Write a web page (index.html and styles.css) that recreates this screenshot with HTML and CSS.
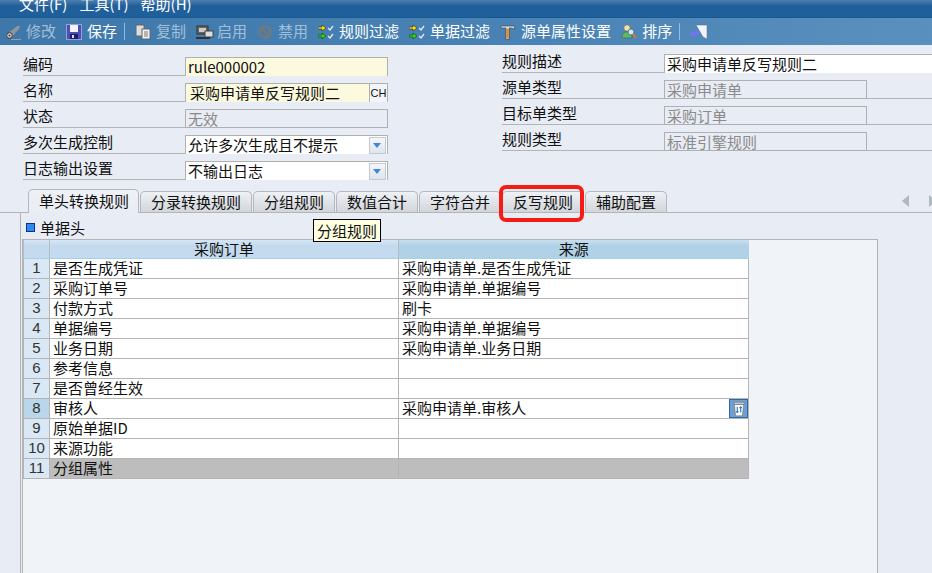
FILE: index.html
```html
<!DOCTYPE html>
<html lang="zh-CN">
<head>
    <meta charset="UTF-8">
    <title>规则</title>
    <link rel="stylesheet" href="styles.css">
</head>
<body>
    <div class="menubar">
        <span>文件(F)</span>
        <span>工具(T)</span>
        <span>帮助(H)</span>
    </div>

    <div class="toolbar">
        <span class="tool off"><svg class="ico" viewBox="0 0 16 16"><path d="M2 10 L12 2 L15 2 L14 5 L6 14 Z" fill="#8f9499"/><circle cx="4.5" cy="11.5" r="2.8" fill="#d8d8d8" stroke="#333"/><circle cx="4.5" cy="11.5" r="1" fill="#333"/><path d="M6 15.5 H16" stroke="#a89a88"/></svg>修改</span>
        <span class="tool"><svg class="ico" viewBox="0 0 16 16"><rect x=".5" y=".5" width="15" height="15" fill="#4a4fb0" stroke="#9a9ee0"/><rect x="4" y="1" width="8" height="7" fill="#f4f4ff"/><rect x="4" y="10" width="8" height="5" fill="#1c1f70"/><rect x="6" y="11" width="2" height="3" fill="#ddd"/></svg>保存</span>
        <i class="sep"></i>
        <span class="tool off"><svg class="ico" viewBox="0 0 16 16"><rect x="1" y="1" width="8" height="11" fill="#ddd" stroke="#666"/><rect x="7" y="5" width="8" height="10" fill="#f2f2f2" stroke="#666"/><path d="M9 8 H13 M9 10 H13 M9 12 H13" stroke="#777"/></svg>复制</span>
        <span class="tool off"><svg class="ico wide" viewBox="0 0 18 16"><rect x="1" y="2" width="11" height="8" fill="#666" stroke="#333"/><rect x="3" y="4" width="7" height="4" fill="#ccc"/><rect x="9" y="7" width="8" height="6" fill="#ddd" stroke="#444"/><path d="M0 14 H14" stroke="#333" stroke-width="2"/></svg>启用</span>
        <span class="tool off"><svg class="ico" viewBox="0 0 16 16"><circle cx="8" cy="8" r="5.5" fill="none" stroke="#777" stroke-width="2.4"/><path d="M4 4 L12 12" stroke="#777" stroke-width="2"/></svg>禁用</span>
        <span class="tool"><svg class="ico" viewBox="0 0 16 16"><path d="M0 3 H4 V1 L8 4 L4 7 V5 H0 Z" fill="#ffd800" stroke="#222" stroke-width=".5"/><path d="M0 11 H4 V9 L8 12 L4 15 V13 H0 Z" fill="#22e000" stroke="#222" stroke-width=".5"/><path d="M10 4 L12 6 L15 2 M10 12 L12 14 L15 10" fill="none" stroke="#e8e8e8" stroke-width="1.3"/></svg>规则过滤</span>
        <span class="tool"><svg class="ico" viewBox="0 0 16 16"><path d="M0 3 H4 V1 L8 4 L4 7 V5 H0 Z" fill="#ffd800" stroke="#222" stroke-width=".5"/><path d="M0 11 H4 V9 L8 12 L4 15 V13 H0 Z" fill="#22e000" stroke="#222" stroke-width=".5"/><path d="M10 4 L12 6 L15 2 M10 12 L12 14 L15 10" fill="none" stroke="#e8e8e8" stroke-width="1.3"/></svg>单据过滤</span>
        <span class="tool"><svg class="ico" viewBox="0 0 16 16"><path d="M1 2 H14 L15 5 L11 4 H9 V14 H10 V15 H5 V14 H6 V4 H1 Z" fill="#d9d9d9" stroke="#333" stroke-width=".5"/><rect x="6" y="5" width="3" height="9" fill="#e09030"/></svg>源单属性设置</span>
        <span class="tool"><svg class="ico" viewBox="0 0 16 16"><circle cx="6" cy="4" r="3" fill="#f0e2a0" stroke="#777" stroke-width=".5"/><path d="M1 14 C1 9 3 8 6 8 C9 8 11 9 11 14 Z" fill="#5cb868" stroke="#2a6a38" stroke-width=".5"/><circle cx="10" cy="8" r="3" fill="#cfe6ff" stroke="#555" stroke-width=".7"/><path d="M12 10 L15 14" stroke="#d08020" stroke-width="2"/></svg>排序</span>
        <i class="sep"></i>
        <span class="tool"><svg class="ico wide" viewBox="0 0 18 16"><path d="M6 1 H17 V15 L13 13 Z" fill="#f0f4ff" stroke="#667" stroke-width=".5"/><path d="M0 8 L5 8 L5 5 L11 9 L5 12 L0 12 Z" fill="#6a78e8"/></svg></span>
    </div>

    <div class="form">
        <div class="form-col left">
            <div class="row"><label>编码</label><div class="field yellow">rule000002</div></div>
            <div class="row"><label>名称</label><div class="field yellow name">采购申请单反写规则二<b class="ch">CH</b></div></div>
            <div class="row"><label>状态</label><div class="field disabled">无效</div></div>
            <div class="row"><label>多次生成控制</label><div class="field select">允许多次生成且不提示<b class="drop"></b></div></div>
            <div class="row"><label>日志输出设置</label><div class="field select">不输出日志<b class="drop"></b></div></div>
        </div>
        <div class="form-col right">
            <div class="row"><label>规则描述</label><div class="field long">采购申请单反写规则二</div></div>
            <div class="row"><label>源单类型</label><div class="field disabled">采购申请单</div></div>
            <div class="row"><label>目标单类型</label><div class="field disabled">采购订单</div></div>
            <div class="row"><label>规则类型</label><div class="field disabled">标准引擎规则</div></div>
        </div>
    </div>

    <div class="tabs">
        <span class="tab active">单头转换规则</span>
        <span class="tab">分录转换规则</span>
        <span class="tab">分组规则</span>
        <span class="tab">数值合计</span>
        <span class="tab">字符合并</span>
        <span class="tab">反写规则</span>
        <span class="tab">辅助配置</span>
        <span class="tab-arrows"><i class="arrow back"></i><i class="arrow next"></i></span>
    </div>

    <div class="panel">
        <div class="panel-title"><i class="square"></i>单据头</div>
        <div class="grid-wrap">
            <table class="grid">
                <colgroup><col class="c0"><col class="c1"><col class="c2"></colgroup>
                <thead>
                    <tr><th></th><th>采购订单</th><th class="src">来源</th></tr>
                </thead>
                <tbody>
                    <tr><td class="num">1</td><td>是否生成凭证</td><td>采购申请单.是否生成凭证</td></tr>
                    <tr><td class="num">2</td><td>采购订单号</td><td>采购申请单.单据编号</td></tr>
                    <tr><td class="num">3</td><td>付款方式</td><td>刷卡</td></tr>
                    <tr><td class="num">4</td><td>单据编号</td><td>采购申请单.单据编号</td></tr>
                    <tr><td class="num">5</td><td>业务日期</td><td>采购申请单.业务日期</td></tr>
                    <tr><td class="num">6</td><td>参考信息</td><td></td></tr>
                    <tr><td class="num">7</td><td>是否曾经生效</td><td></td></tr>
                    <tr class="current"><td class="num">8</td><td>审核人</td><td class="has-btn">采购申请单.审核人<span class="clear-btn"><svg viewBox="0 0 14 14"><path d="M3 3 H11 L10 13 H4 Z" fill="#fff" stroke="#777" stroke-width=".6"/><rect x="2.5" y="1" width="9" height="2" fill="#ccc" stroke="#666" stroke-width=".5"/><path d="M5.5 5 V10 M4.5 9 L5.5 10 L6.5 9 M8.5 10 V5 M7.5 6 L8.5 5 L9.5 6" fill="none" stroke="#2a78c8"/></svg></span></td></tr>
                    <tr><td class="num">9</td><td>原始单据ID</td><td></td></tr>
                    <tr><td class="num">10</td><td>来源功能</td><td></td></tr>
                    <tr class="grey"><td class="num">11</td><td>分组属性</td><td></td></tr>
                </tbody>
            </table>
        </div>
    </div>

    <div class="tooltip">分组规则</div>
    <div class="mark"></div>
</body>
</html>
```

FILE: styles.css
```css
html, body {
    margin: 0;
    height: 100%;
    overflow: hidden;
}
body {
    position: relative;
    font-family: "Noto Sans CJK SC", "Liberation Sans", sans-serif;
    font-size: 15px;
    color: #111;
    background-color: #e8ecf4;
}
.menubar {
    height: 18px;
    display: flex;
    gap: 12px;
    padding-left: 19px;
    overflow: hidden;
    color: #fff;
    background: linear-gradient(#4d80ae, #215f9a 35%, #1e5f9b);
    border-bottom: 1px solid #1a5a90;
    box-sizing: border-box;
}
.menubar span {
    margin-top: -5px;
    line-height: 18px;
}
.toolbar {
    height: 27px;
    display: flex;
    align-items: center;
    padding-left: 5px;
    background: linear-gradient(90deg, #3e78ab, #4a84b6 60%, #5a90bd);
    color: #fff;
}
.tool {
    display: flex;
    align-items: center;
    gap: 5px;
    margin-right: 10px;
    padding-bottom: 2px;
    white-space: nowrap;
}
.tool.off {
    color: #a3bfd8;
}
.ico {
    width: 16px;
    height: 16px;
    margin-top: 2px;
    flex: none;
}
.ico.wide {
    width: 18px;
    margin-right: -2px;
}
.sep {
    width: 1px;
    height: 17px;
    background-color: #8cc0e6;
    margin: 0 10px 0 -3px;
}
.form {
    display: flex;
    height: 145px;
}
.form-col {
    display: flex;
    flex-direction: column;
}
.form-col.left {
    width: 365px;
    margin: 5px 0 0 23px;
}
.form-col.right {
    flex: 1;
    margin: 2px 0 0 114px;
}
.row {
    display: flex;
    height: 26px;
    box-sizing: border-box;
    padding-top: 7px;
    border-bottom: 1px solid #b4b4b4;
    position: relative;
}
.row label {
    width: 162px;
    flex: none;
    line-height: 16px;
    margin-top: -1px;
}
.field {
    position: relative;
    width: 203px;
    height: 19px;
    box-sizing: border-box;
    border: 1px solid #b0b0b0;
    border-bottom: 0;
    padding-left: 2px;
    line-height: 18px;
    background-color: #fff;
    white-space: nowrap;
    overflow: hidden;
}
.field.yellow {
    background-color: #fbfade;
}
.field.name {
    padding-left: 4px;
}
.field.disabled {
    background-color: #e8ecf4;
    color: #8a8a8a;
    border-bottom: 1px solid #b0b0b0;
}
.field.long {
    width: 270px;
    border-right: 0;
}
.ch {
    position: absolute;
    top: 0;
    right: 0;
    width: 17px;
    height: 18px;
    border-left: 1px solid #b0b0b0;
    background-color: #f2f4f8;
    font: 11px/18px "Liberation Sans", sans-serif;
    text-align: center;
}
.drop {
    position: absolute;
    top: 1px;
    right: 1px;
    width: 15px;
    height: 15px;
    border: 1px solid #c4c8d0;
    background: linear-gradient(#f4f6fa, #dfe5ee);
}
.drop::after {
    content: "";
    position: absolute;
    left: 3px;
    top: 5px;
    border: 4px solid transparent;
    border-top: 5px solid #3f86dc;
    border-bottom: 0;
}
.tabs {
    height: 23px;
    display: flex;
    align-items: flex-end;
    gap: 1px;
    padding-left: 28px;
    border-bottom: 1px solid #b4b4b4;
    box-sizing: border-box;
}
.tab {
    height: 20px;
    line-height: 19px;
    padding: 0 10px;
    border: 1px solid #b4b8be;
    border-bottom: 0;
    border-radius: 5px 5px 0 0;
    background: linear-gradient(#eef1f5, #d2d6da);
    white-space: nowrap;
}
.tab.active {
    height: 23px;
    line-height: 22px;
    padding-right: 9px;
    background: linear-gradient(#eef1f6, #e8ecf4);
    margin-bottom: -1px;
}
.tab-arrows {
    margin-left: auto;
    display: flex;
    gap: 20px;
    height: 22px;
    align-items: center;
}
.arrow {
    border: 6px solid transparent;
    border-left-width: 0;
    border-right: 7px solid #b0b8c0;
}
.arrow.next {
    border-right-width: 0;
    border-left: 7px solid #b0b8c0;
    margin-right: -4px;
}
.panel {
    margin-left: 20px;
    border-left: 1px solid #b4b4b4;
    padding-left: 1px;
}
.panel-title {
    height: 26px;
    display: flex;
    align-items: center;
    gap: 5px;
    padding: 2px 0 0 4px;
    box-sizing: border-box;
}
.square {
    width: 7px;
    height: 7px;
    border: 1px solid #0c2f9a;
    background-color: #2f8ae8;
}
.grid-wrap {
    width: 856px;
    height: 340px;
    box-sizing: border-box;
    background-color: #f0f4f8;
    border-top: 1px solid #b4b4b4;
    border-left: 1px solid #b4b4b4;
    border-right: 1px solid #b4b4b4;
}
.grid {
    width: 726px;
    table-layout: fixed;
    border-collapse: collapse;
}
.c0 {
    width: 26px;
}
.c2 {
    width: 350px;
}
.grid th {
    height: 18px;
    padding: 0;
    line-height: 18px;
    font-weight: 400;
    background: linear-gradient(#d6e6f4, #c4dbef 30%);
    border-left: 1px solid #b4bcc4;
    border-bottom: 1px solid #9fd4e0;
}
.grid th.src {
    background: linear-gradient(#c8e0ef, #b1d2e6 30%);
}
.grid td {
    height: 17px;
    padding: 0 0 2px 3px;
    line-height: 16px;
    background-color: #fff;
    border: 1px solid #b4b4b4;
    white-space: nowrap;
}
.grid td.num {
    padding: 0 0 1px;
    text-align: center;
    background-color: #d9e8f4;
    font-family: "Liberation Sans", sans-serif;
    color: #333;
}
.current td.num {
    background-color: #b9d6ea;
}
.grey td {
    background-color: #bdbdbd;
}
.has-btn {
    position: relative;
}
.clear-btn {
    position: absolute;
    top: 0;
    right: 0;
    width: 19px;
    height: 19px;
    box-sizing: border-box;
    border: 1px solid #2f68a8;
    background-color: #6f9fd2;
    display: flex;
    align-items: center;
    justify-content: center;
}
.clear-btn svg {
    width: 16px;
    height: 16px;
}
.tooltip {
    position: absolute;
    left: 313px;
    top: 219px;
    width: 68px;
    height: 23px;
    box-sizing: border-box;
    border: 1px solid #000;
    background-color: #ffffe1;
    line-height: 21px;
    text-align: center;
}
.mark {
    position: absolute;
    left: 499px;
    top: 185px;
    width: 85px;
    height: 37px;
    box-sizing: border-box;
    border: 4px solid #f51c14;
    border-radius: 7px;
}
```
